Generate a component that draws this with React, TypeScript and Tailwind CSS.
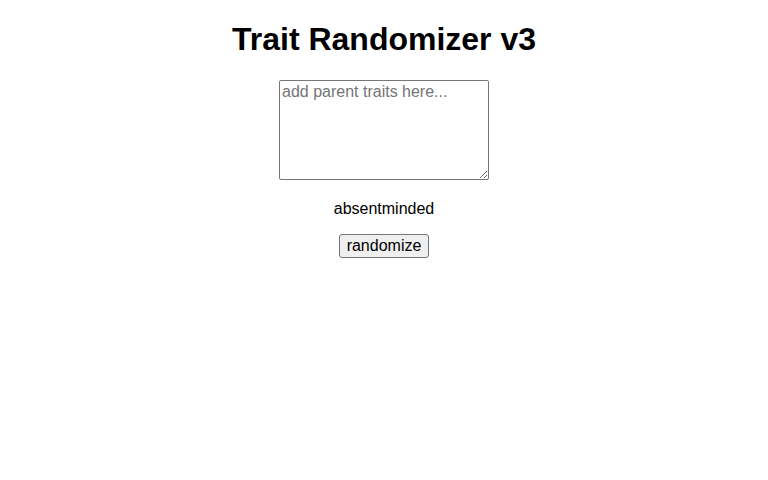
import { useState } from 'react';

const TRAITS = ['absentminded', 'brave', 'curious', 'stubborn', 'cheerful', 'shy', 'clever', 'lazy'];

export default function App() {
  const [parents, setParents] = useState('');
  const [trait, setTrait] = useState('absentminded');

  const randomize = () => {
    const pool = parents
      .split(/[\n,]/)
      .map((t) => t.trim())
      .filter(Boolean);
    const list = pool.length ? pool : TRAITS;
    setTrait(list[Math.floor(Math.random() * list.length)]);
  };

  return (
    <div className="min-h-[480px] bg-white font-['Liberation_Sans',Arial,sans-serif] text-black flex flex-col items-center">
      <h1 className="mt-[21px] mb-[22px] text-[32px] leading-[37px] font-bold">Trait Randomizer v3</h1>
      <textarea
        value={parents}
        onChange={(e) => setParents(e.target.value)}
        placeholder="add parent traits here..."
        className="w-[210px] h-[100px] border border-[#767676] rounded-[2px] px-[2px] pt-[2px] text-[16px] leading-[18px] placeholder:text-[#757575] outline-none"
      />
      <p className="mt-[20px] text-[16px] leading-[18px]">{trait}</p>
      <button
        onClick={randomize}
        className="mt-[16px] h-[24px] px-[7px] border border-[#767676] rounded-[3px] bg-[#efefef] text-[16px] leading-[18px]"
      >
        randomize
      </button>
    </div>
  );
}
